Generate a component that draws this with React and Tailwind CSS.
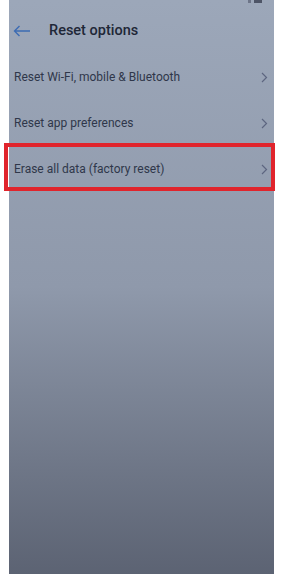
import React from "react";

const rows = [
  { label: "Reset Wi-Fi, mobile & Bluetooth", h: "h-[46px]" },
  { label: "Reset app preferences", h: "h-[46px]" },
  { label: "Erase all data (factory reset)", h: "h-[46px]" },
];

const Chevron = () => (
  <svg width="7" height="11" viewBox="0 0 7 11" fill="none">
    <path d="M1 1l4.5 4.5L1 10" stroke="#5d6680" strokeWidth="1.2" />
  </svg>
);

const App = () => {
  return (
    <div
      className="w-[287px] h-[574px] bg-white flex overflow-hidden"
      style={{ fontFamily: "Roboto, 'Noto Sans', sans-serif" }}
    >
      <div className="relative ml-[9px] w-[265px] h-full bg-gradient-to-b from-[#9ca7b9] via-[#8f99ab] to-[#5c6373] flex flex-col">
        {/* status bar remnant */}
        <div className="h-[8px] flex justify-end pr-[12px] gap-[3px]">
          <div className="w-[3px] h-[3px] bg-[#6d7588]" />
          <div className="w-[8px] h-[3px] bg-[#4d5466]" />
        </div>

        {/* header */}
        <div className="h-[46px] flex items-center">
          <svg className="ml-[4px]" width="18" height="12" viewBox="0 0 18 12" fill="none">
            <path d="M17 6H1.5M6.5 1L1.5 6l5 5" stroke="#3d6cb3" strokeWidth="1.4" />
          </svg>
          <span className="ml-[18px] text-[14.5px] font-medium text-[#1f2737]">Reset options</span>
        </div>

        {/* rows */}
        {rows.map((r) => (
          <div key={r.label} className={`${r.h} flex items-center justify-between pl-[5px] pr-[6px]`}>
            <span className="text-[12px] text-[#2f374a]">{r.label}</span>
            <Chevron />
          </div>
        ))}

        {/* highlight box */}
        <div className="absolute left-[-5px] top-[143px] w-[271px] h-[48px] border-[4px] border-[#e0242c]" />
      </div>
    </div>
  );
};

export default App;
